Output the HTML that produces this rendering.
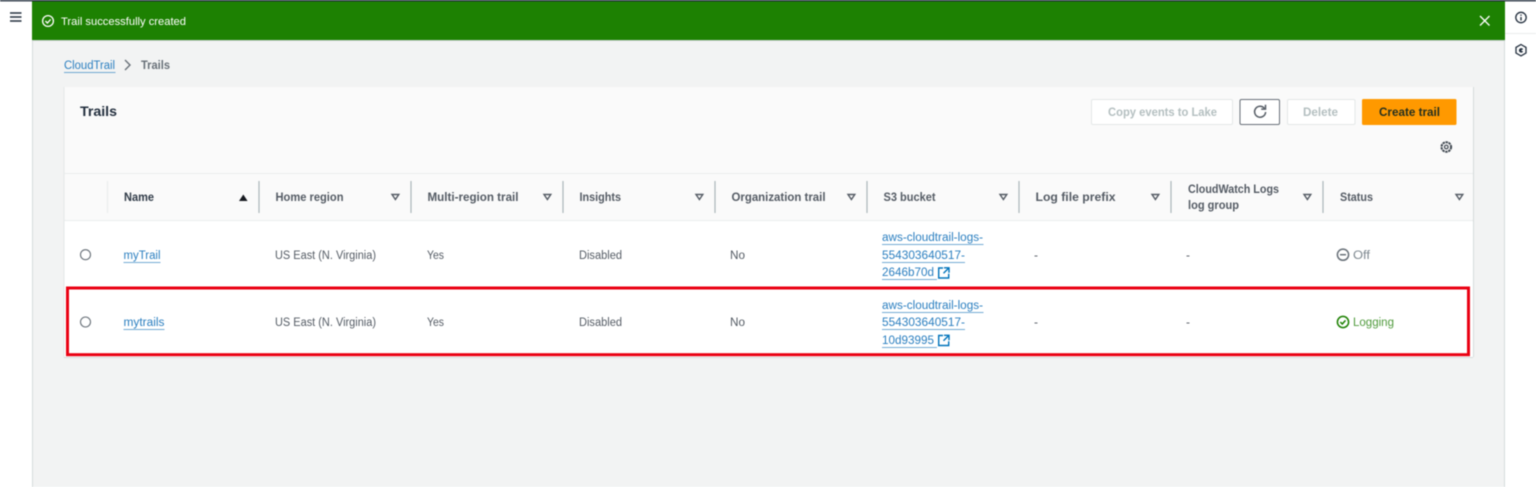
<!DOCTYPE html>
<html lang="en">
<head>
<meta charset="utf-8">
<title>Trails</title>
<style>
html,body{margin:0;padding:0;width:1536px;height:487px;overflow:hidden;background:#fff}
svg{display:block;filter:blur(.5px)}
text{font-family:"Liberation Sans",sans-serif;font-size:11.5px;fill:#545b64}
.b{font-weight:700}
.l{fill:#2b7fc0}
.u{stroke:#2b7fc0;stroke-width:1;opacity:.65}
.s{stroke:#aab7b8;stroke-width:1.200}
</style>
</head>
<body>
<svg width="1536" height="487" viewBox="0 0 1536 487" xmlns="http://www.w3.org/2000/svg">
<rect width="1536" height="487" fill="#fff"/>
<rect x="32" y="0" width="1473" height="487" fill="#f2f3f3"/>
<rect x="32" y="0" width="1" height="487" fill="#d5dbdb"/>
<rect x="1504" y="0" width="1" height="487" fill="#d5dbdb"/>
<rect x="1505" y="33" width="31" height="1" fill="#eaeded"/>
<rect x="32" y="1" width="1473" height="39" fill="#1d8102"/>
<rect x="32" y="40" width="1473" height="1" fill="#c9d0d0"/>
<rect width="1536" height="1.400" fill="#232f3e"/>

<path d="M10 13h11.500M10 17h11.500M10 21h11.500" stroke="#232f3e" stroke-width="1.600" fill="none"/>
<circle cx="48" cy="21" r="5.400" fill="none" stroke="#fff" stroke-width="1.300"/>
<path d="M45.400 21l2 2 3.200-3.600" fill="none" stroke="#fff" stroke-width="1.300"/>
<text x="61" y="25" style="fill:#fff;font-size:11px" textLength="125" lengthAdjust="spacingAndGlyphs">Trail successfully created</text>
<path d="M1480 16l9.500 9.500M1489.500 16l-9.500 9.500" stroke="#fff" stroke-width="1.300" fill="none"/>

<circle cx="1521" cy="17.500" r="5.200" fill="none" stroke="#232f3e" stroke-width="1.300"/>
<path d="M1521 17v3.500M1521 14.500v1.300" stroke="#232f3e" stroke-width="1.400"/>
<path d="M1521 44.500l5 2.900v5.600l-5 2.900-5-2.900v-5.600z" fill="none" stroke="#232f3e" stroke-width="1.300"/>
<path d="M1523.200 49.300a2.300 2.300 0 1 0 0 2.200l-2.200-1z" fill="#232f3e"/>

<text class="l" x="64" y="69" textLength="51" lengthAdjust="spacingAndGlyphs">CloudTrail</text>
<path class="u" d="M64 72.500h51.500"/>
<path d="M125 60l5 5-5 5" fill="none" stroke="#687078" stroke-width="1.400"/>
<text class="b" x="141" y="69" style="fill:#687078" textLength="29" lengthAdjust="spacingAndGlyphs">Trails</text>

<rect x="64" y="87" width="1409" height="270" fill="#fff"/>
<rect x="64" y="87" width="1409" height="133" fill="#fafafa"/>
<path d="M64 87v270" stroke="#e4e7e7"/>
<path d="M1473.500 87v270" stroke="#d5dbdb"/>
<path d="M64 357.500h1409" stroke="#d5dbdb"/>
<path d="M64 173.500h1409M64 220.500h1409" stroke="#eaeded"/>

<text class="b" x="80" y="116" style="font-size:14px;fill:#232f3e" textLength="37" lengthAdjust="spacingAndGlyphs">Trails</text>

<rect x="1091.500" y="99.500" width="141" height="25" fill="#fff" stroke="#e4e8e8" rx="1.500"/>
<text class="b" x="1108" y="116" style="fill:#b4bfc0" textLength="109" lengthAdjust="spacingAndGlyphs">Copy events to Lake</text>
<rect x="1240" y="99.500" width="39.500" height="25" fill="#fff" stroke="#687078" rx="1.500"/>
<path d="M1264.400 108.300a5.500 5.500 0 1 0 1.200 3.700" fill="none" stroke="#545b64" stroke-width="1.500"/>
<path d="M1265.500 104.800v4.300h-4.300" fill="none" stroke="#545b64" stroke-width="1.500"/>
<rect x="1287.500" y="99.500" width="67.500" height="25" fill="#fff" stroke="#e4e8e8" rx="1.500"/>
<text class="b" x="1303" y="116" style="fill:#b4bfc0" textLength="35" lengthAdjust="spacingAndGlyphs">Delete</text>
<rect x="1362" y="99" width="94.500" height="26" fill="#ff9900" rx="1.500"/>
<text class="b" x="1379" y="116" style="fill:#232f1f" textLength="61" lengthAdjust="spacingAndGlyphs">Create trail</text>

<circle cx="1446.300" cy="147" r="4.800" fill="none" stroke="#3f4750" stroke-width="2" stroke-dasharray="2.400 .7"/>
<circle cx="1446.300" cy="147" r="1.800" fill="none" stroke="#3f4750" stroke-width="1.200"/>

<path d="M107.500 181v32" stroke="#eaeded" stroke-width="1.200"/>
<path class="s" d="M259 181v32M411 181v32M563 181v32M715 181v32M867 181v32M1019 181v32M1171 181v32M1323 181v32"/>

<text class="b" x="124" y="201" style="fill:#2f3a47" textLength="30" lengthAdjust="spacingAndGlyphs">Name</text>
<path d="M239 201l4.300-6.500 4.300 6.500z" fill="#16191f"/>
<text class="b" x="275.500" y="201" textLength="68" lengthAdjust="spacingAndGlyphs">Home region</text>
<text class="b" x="427.500" y="201" textLength="91" lengthAdjust="spacingAndGlyphs">Multi-region trail</text>
<text class="b" x="579.500" y="201" textLength="41.500" lengthAdjust="spacingAndGlyphs">Insights</text>
<text class="b" x="731.500" y="201" textLength="94" lengthAdjust="spacingAndGlyphs">Organization trail</text>
<text class="b" x="883.500" y="201" textLength="52" lengthAdjust="spacingAndGlyphs">S3 bucket</text>
<text class="b" x="1035.500" y="201" textLength="80" lengthAdjust="spacingAndGlyphs">Log file prefix</text>
<text class="b" x="1188" y="193" textLength="91" lengthAdjust="spacingAndGlyphs">CloudWatch Logs</text>
<text class="b" x="1188" y="209" textLength="51" lengthAdjust="spacingAndGlyphs">log group</text>
<text class="b" x="1340" y="201" textLength="33" lengthAdjust="spacingAndGlyphs">Status</text>
<g fill="none" stroke="#545b64" stroke-width="1.400">
<path d="M392 194.500h6.800l-3.400 5z"/><path d="M544 194.500h6.800l-3.400 5z"/><path d="M696 194.500h6.800l-3.400 5z"/><path d="M848 194.500h6.800l-3.400 5z"/><path d="M1000 194.500h6.800l-3.400 5z"/><path d="M1152 194.500h6.800l-3.400 5z"/><path d="M1304 194.500h6.800l-3.400 5z"/><path d="M1456 194.500h6.800l-3.400 5z"/>
</g>

<circle cx="85.500" cy="254.700" r="5" fill="#fff" stroke="#687078" stroke-width="1.100"/>
<text class="l" x="123.500" y="259" textLength="37" lengthAdjust="spacingAndGlyphs">myTrail</text>
<path class="u" d="M123.500 262.500h37"/>
<text x="275" y="259" textLength="101" lengthAdjust="spacingAndGlyphs">US East (N. Virginia)</text>
<text x="427" y="259" textLength="17" lengthAdjust="spacingAndGlyphs">Yes</text>
<text x="579" y="259" textLength="43" lengthAdjust="spacingAndGlyphs">Disabled</text>
<text x="730" y="259" textLength="15" lengthAdjust="spacingAndGlyphs">No</text>
<text class="l" x="882" y="241" textLength="101" lengthAdjust="spacingAndGlyphs">aws-cloudtrail-logs-</text>
<path class="u" d="M882 244.500h101.500"/>
<text class="l" x="882" y="259" textLength="83" lengthAdjust="spacingAndGlyphs">554303640517-</text>
<path class="u" d="M882 262.500h83"/>
<text class="l" x="882" y="276" textLength="52" lengthAdjust="spacingAndGlyphs">2646b70d</text>
<path class="u" d="M882 279.500h55"/>
<path d="M943 268h-4.300v10h10v-4.300M944 267.800h5v5M949 267.800l-5.500 5.500" fill="none" stroke="#0073bb" stroke-width="1.400"/>
<text x="1034" y="259" textLength="4" lengthAdjust="spacingAndGlyphs">-</text>
<text x="1186" y="259" textLength="4" lengthAdjust="spacingAndGlyphs">-</text>
<circle cx="1343" cy="254.700" r="5.600" fill="none" stroke="#687078" stroke-width="1.500"/>
<path d="M1340 254.700h6" stroke="#687078" stroke-width="1.500"/>
<text x="1353" y="259" style="fill:#7d878f" textLength="17" lengthAdjust="spacingAndGlyphs">Off</text>

<circle cx="85.500" cy="322" r="5" fill="#fff" stroke="#687078" stroke-width="1.100"/>
<text class="l" x="123.500" y="326" textLength="41" lengthAdjust="spacingAndGlyphs">mytrails</text>
<path class="u" d="M123.500 329.500h41"/>
<text x="275" y="326" textLength="101" lengthAdjust="spacingAndGlyphs">US East (N. Virginia)</text>
<text x="427" y="326" textLength="17" lengthAdjust="spacingAndGlyphs">Yes</text>
<text x="579" y="326" textLength="43" lengthAdjust="spacingAndGlyphs">Disabled</text>
<text x="730" y="326" textLength="15" lengthAdjust="spacingAndGlyphs">No</text>
<text class="l" x="882" y="309" textLength="101" lengthAdjust="spacingAndGlyphs">aws-cloudtrail-logs-</text>
<path class="u" d="M882 312.500h101.500"/>
<text class="l" x="882" y="326" textLength="83" lengthAdjust="spacingAndGlyphs">554303640517-</text>
<path class="u" d="M882 329.500h83"/>
<text class="l" x="882" y="344" textLength="52" lengthAdjust="spacingAndGlyphs">10d93995</text>
<path class="u" d="M882 347.500h55"/>
<path d="M943 335.500h-4.300v10h10v-4.300M944 335.300h5v5M949 335.300l-5.500 5.500" fill="none" stroke="#0073bb" stroke-width="1.400"/>
<text x="1034" y="326" textLength="4" lengthAdjust="spacingAndGlyphs">-</text>
<text x="1186" y="326" textLength="4" lengthAdjust="spacingAndGlyphs">-</text>
<circle cx="1343" cy="322" r="5.600" fill="none" stroke="#1d8102" stroke-width="1.500"/>
<path d="M1340.300 322l2 2 3.200-3.600" fill="none" stroke="#1d8102" stroke-width="1.500"/>
<text x="1353" y="326" style="fill:#4f9a3c" textLength="41" lengthAdjust="spacingAndGlyphs">Logging</text>

<rect x="67.500" y="288" width="1401" height="66.700" fill="none" stroke="#ea0012" stroke-width="3"/>
</svg>
</body>
</html>
